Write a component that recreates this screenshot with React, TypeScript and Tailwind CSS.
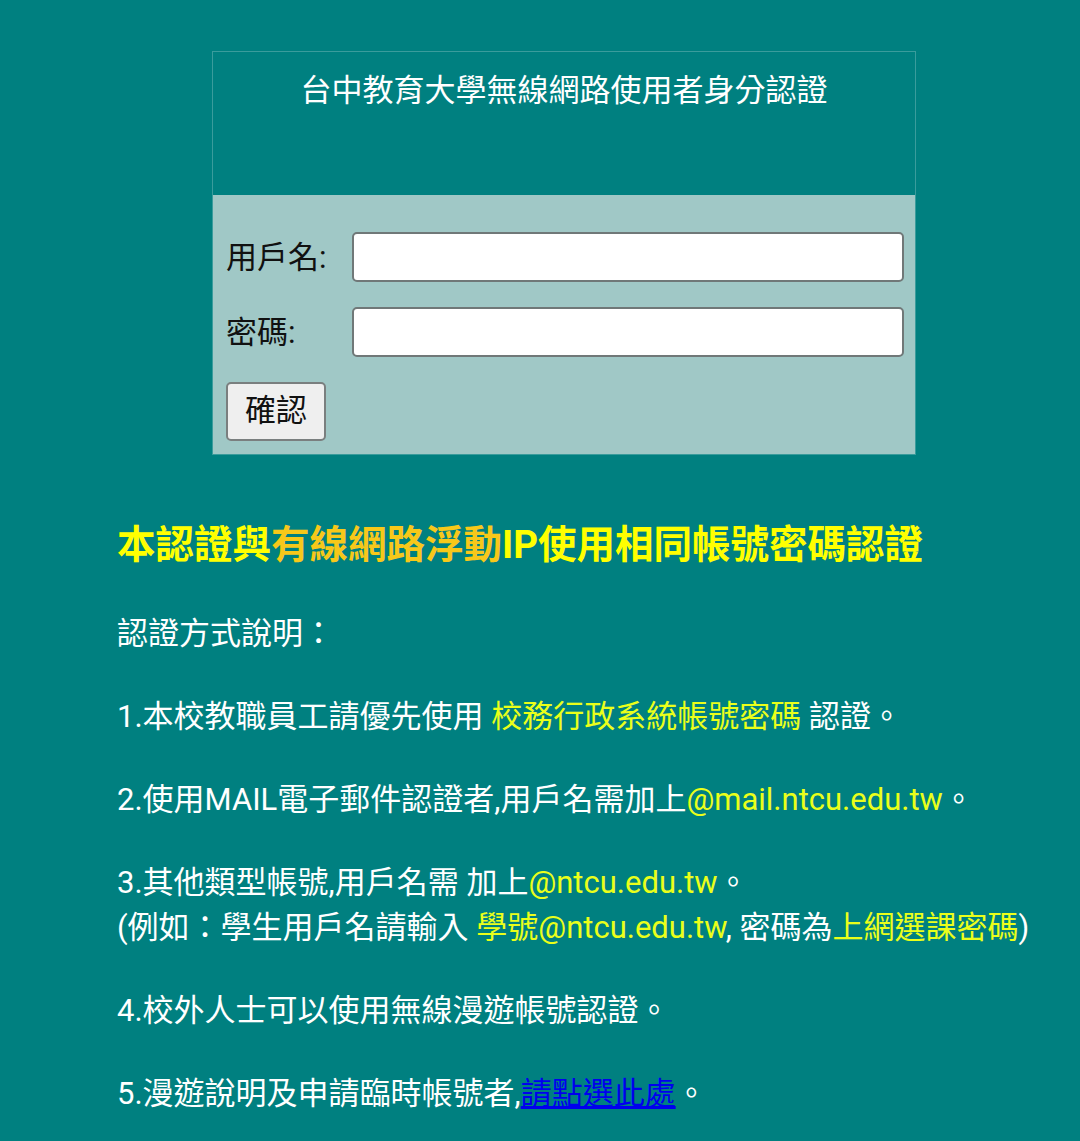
import React from 'react'

const font = { fontFamily: 'Roboto, "Noto Sans CJK TC", sans-serif' }

function Field({ label, type }: { label: string; type: string }) {
  return (
    <div className="flex items-center">
      <label className="w-[126px] shrink-0 text-[31px] leading-none text-[#111]">{label}</label>
      <input
        type={type}
        className="h-[50px] flex-1 rounded-[5px] border-2 border-[#707878] bg-white px-2 text-[24px] outline-none"
      />
    </div>
  )
}

export default function App() {
  return (
    <div className="min-h-[1141px] bg-[#008080] pl-[117px] pt-[51px] text-white" style={font}>
      <div className="ml-[95px] w-[704px] border border-[#3a9c9c]">
        <div className="h-[143px] pt-[18px] text-center text-[31px] leading-[42px] text-white">
          台中教育大學無線網路使用者身分認證
        </div>
        <form className="flex flex-col gap-[25px] bg-[#a0c8c6] pb-[13px] pl-[13px] pr-[11px] pt-[37px]">
          <Field label="用戶名:" type="text" />
          <Field label="密碼:" type="password" />
          <div>
            <button
              type="button"
              className="h-[59px] w-[100px] rounded-[5px] border-2 border-[#7a7f7f] bg-[#efefef] text-[31px] text-[#111]"
            >
              確認
            </button>
          </div>
        </form>
      </div>

      <h1 className="mt-[67px] text-[38.5px] font-bold leading-[46px] text-[#ffff00]">
        本認證與<span className="text-[#f7c81a]">有線網路浮動</span>IP使用相同帳號密碼認證
      </h1>

      <div className="mt-[43px] flex flex-col gap-[38px] text-[31px] leading-[45px]">
        <p>認證方式說明：</p>
        <p>
          1.本校教職員工請優先使用 <span className="text-[#eaff1a]">校務行政系統帳號密碼</span> 認證。
        </p>
        <p>
          2.使用MAIL電子郵件認證者,用戶名需加上<span className="text-[#eaff1a]">@mail.ntcu.edu.tw</span>。
        </p>
        <p>
          3.其他類型帳號,用戶名需 加上<span className="text-[#eaff1a]">@ntcu.edu.tw</span>。
          <br />
          (例如：學生用戶名請輸入 <span className="text-[#eaff1a]">學號@ntcu.edu.tw</span>, 密碼為
          <span className="text-[#eaff1a]">上網選課密碼</span>)
        </p>
        <p>4.校外人士可以使用無線漫遊帳號認證。</p>
        <p>
          5.漫遊說明及申請臨時帳號者,
          <a href="#" className="text-[#0000ee] underline">
            請點選此處
          </a>
          。
        </p>
      </div>
    </div>
  )
}
